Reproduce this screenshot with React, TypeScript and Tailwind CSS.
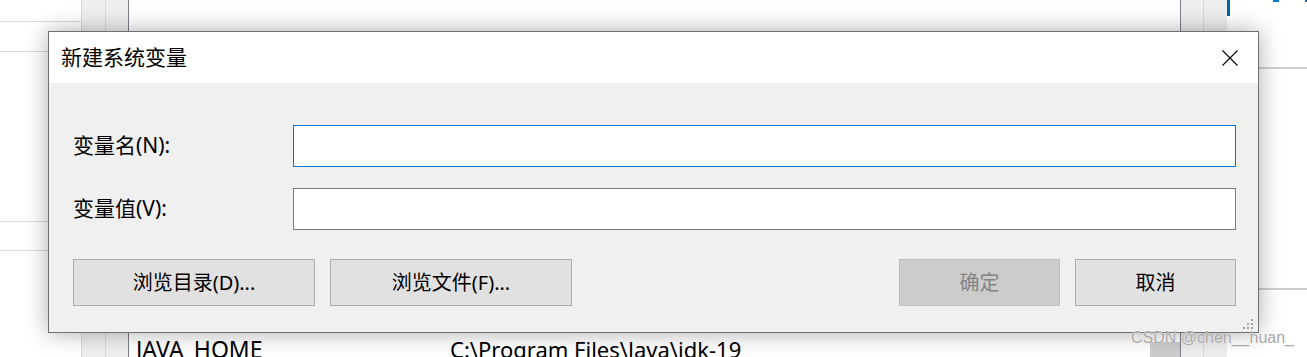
const cjk = "font-['Noto_Sans','Noto_Sans_CJK_SC',sans-serif]";

function Background() {
  return (
    <div className="flex h-full w-full">
      {/* left list pane */}
      <div className="flex w-[81px] shrink-0 flex-col">
        <div className="h-[22px] shrink-0 border-b border-[#d9d9d9]" />
        <div className="h-[30px] shrink-0 border-b border-[#d9d9d9]" />
        <div className="h-[170px] shrink-0 border-b border-[#d9d9d9]" />
        <div className="h-[29px] shrink-0 border-b border-[#d9d9d9]" />
      </div>
      <div className="flex w-[47px] shrink-0 border-l border-[#d6d6d6] bg-[#efefef]">
        <div className="w-[24px] border-r border-[#dadada]" />
        <div className="flex-1" />
      </div>
      {/* main list */}
      <div className="flex w-[1052px] shrink-0 flex-col border-l border-[#7b7f87] bg-white">
        <div className="flex-1" />
        <div className="flex h-[22px] items-start overflow-hidden">
          <div className="flex flex-1 whitespace-nowrap leading-[28px] text-black font-['Noto_Sans',sans-serif]">
            <span className="w-[321px] pl-[7px] text-[23px]">JAVA_HOME</span>
            <span className="text-[22px]">C:\Program Files\Java\jdk-19</span>
          </div>
          <div className="mt-[7px] h-[15px] w-[30px] bg-[#cdcdcd]" />
        </div>
      </div>
      <div className="flex w-[47px] shrink-0 border-l border-[#7b7f87] bg-[#eeeeee]">
        <div className="w-[23px] border-r border-[#d8d8d8]" />
        <div className="flex-1" />
      </div>
      <div className="flex w-[4px] shrink-0 flex-col">
        <div className="h-[16px] w-[3px] bg-[#0063b1]" />
      </div>
      {/* right pane */}
      <div className="flex flex-1 flex-col">
        <div className="flex h-[2px] shrink-0">
          <div className="ml-[42px] w-[6px] bg-[#0078d7]" />
          <div className="ml-[26px] w-[2px] bg-[#0078d7]" />
        </div>
        <div className="h-[67px] shrink-0 border-b-2 border-[#cfcfcf]" />
        <div className="h-[221px] shrink-0 border-b-2 border-[#cfcfcf]" />
      </div>
    </div>
  );
}

function CloseIcon() {
  return (
    <svg width="16" height="16" viewBox="0 0 16 16" fill="none">
      <path d="M0.5 0.5 L15.5 15.5 M15.5 0.5 L0.5 15.5" stroke="#000" strokeWidth="1.1" />
    </svg>
  );
}

function Grip() {
  return (
    <svg width="11" height="11" viewBox="0 0 11 11" className="absolute bottom-[2px] right-[4px]">
      {[
        [8, 0],
        [4, 4],
        [8, 4],
        [0, 8],
        [4, 8],
        [8, 8],
      ].map(([x, y]) => (
        <rect key={`${x}-${y}`} x={x} y={y} width="2" height="2" fill="#a3a3a3" />
      ))}
    </svg>
  );
}

function Field({ label, focused }: { label: string; focused?: boolean }) {
  return (
    <div className="flex items-center">
      <label className="w-[220px] text-[21px] text-black">{label}</label>
      <div
        className={
          focused
            ? 'h-[42px] w-[943px] border border-[#0078d7] bg-white'
            : 'h-[42px] w-[943px] border border-[#7a7a7a] bg-white'
        }
      />
    </div>
  );
}

function DlgButton({ children, wide, disabled }: { children: string; wide?: boolean; disabled?: boolean }) {
  const size = wide ? 'w-[242px]' : 'w-[161px]';
  const look = disabled
    ? 'border-[#bfbfbf] bg-[#cccccc] text-[#838383]'
    : 'border-[#adadad] bg-[#e1e1e1] text-black';
  return (
    <button className={`flex h-[47px] ${size} items-center justify-center border text-[20px] ${look}`}>
      {children}
    </button>
  );
}

function Dialog() {
  return (
    <div
      className={`absolute left-[48px] top-[31px] flex h-[302px] w-[1211px] flex-col border border-[#707070] bg-[#f0f0f0] shadow-[0_0_22px_rgba(0,0,0,0.32)] ${cjk}`}
    >
      <div className="flex h-[51px] shrink-0 items-center justify-between bg-white pl-[12px] pr-[20px]">
        <span className="text-[21px] text-black">新建系统变量</span>
        <CloseIcon />
      </div>
      <div className="relative flex flex-1 flex-col pl-[24px] pr-[22px] pt-[42px]">
        <div className="flex flex-col gap-[21px]">
          <Field label="变量名(N):" focused />
          <Field label="变量值(V):" />
        </div>
        <div className="mt-[29px] flex gap-[15px]">
          <DlgButton wide>浏览目录(D)...</DlgButton>
          <DlgButton wide>浏览文件(F)...</DlgButton>
          <div className="flex-1" />
          <DlgButton disabled>确定</DlgButton>
          <DlgButton>取消</DlgButton>
        </div>
        <Grip />
      </div>
    </div>
  );
}

export default function App() {
  return (
    <div className="relative h-[357px] w-[1307px] overflow-hidden bg-white">
      <Background />
      <Dialog />
      <span className="absolute left-[1131px] top-[330px] text-[16px] leading-[16px] text-[#a9a9a9] [text-shadow:0_0_1px_#fff] font-['Liberation_Sans',sans-serif]">
        CSDN @chen__huan_
      </span>
    </div>
  );
}
